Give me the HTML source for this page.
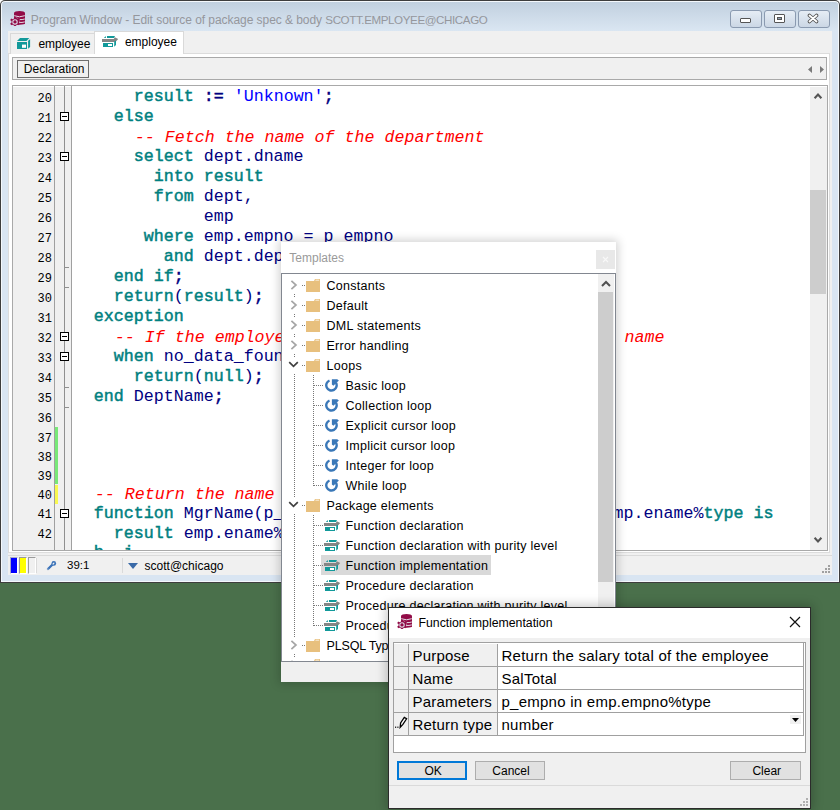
<!DOCTYPE html><html><head><meta charset="utf-8"><style>
*{margin:0;padding:0;box-sizing:border-box}
html,body{width:840px;height:810px;overflow:hidden;background:#4a704b;font-family:"Liberation Sans",sans-serif;position:relative}
.a{position:absolute}
.t{position:absolute;white-space:nowrap;line-height:1}
.code{position:absolute;font-family:"Liberation Mono",monospace;font-size:16.667px;white-space:pre;line-height:20px}
.k{color:#008080;font-weight:normal;-webkit-text-stroke:0.45px #008080}
.i{color:#000080}
.p{color:#000080;font-weight:normal;-webkit-text-stroke:0.45px #000080}
.s{color:#0000ff}
.c{color:#ff0000;font-style:italic;position:relative;left:1px;top:1px}
.ln{position:absolute;font-family:"Liberation Mono",monospace;font-size:12px;color:#000;text-align:right;width:40px;line-height:12px}
.tr{position:absolute;font-size:12.5px;letter-spacing:0.28px;color:#000;white-space:nowrap;line-height:1}
.gt{position:absolute;font-size:15px;letter-spacing:0.25px;color:#000;white-space:nowrap;line-height:1}
</style></head><body>
<div class="a" style="left:0px;top:0px;width:840px;height:8px;background:#fff"></div>
<div class="a" style="left:0px;top:0px;width:840px;height:583px;background:#3d3d3d;border-radius:5px 5px 0 0"></div>
<div class="a" style="left:1px;top:1px;width:838px;height:581px;background:#f4f8fc;border-radius:4px 4px 0 0"></div>
<div class="a" style="left:2px;top:2px;width:836px;height:579px;background:#d9e5f2;border-radius:3px 3px 0 0"></div>
<div class="a" style="left:2px;top:2px;width:836px;height:29px;background:linear-gradient(#c1d0df,#dae6f2);border-radius:3px 3px 0 0"></div>
<svg class="a" style="left:10px;top:10px" width="16" height="16" viewBox="0 0 16 16">
<g fill="#920c47"><ellipse cx="9.5" cy="3.1" rx="5.5" ry="2.2"/><rect x="4" y="3.1" width="11" height="10.6"/><ellipse cx="9.5" cy="13.6" rx="5.5" ry="1.1"/></g>
<path d="M4.2 5.7 Q9.5 7.9 14.8 5.7" stroke="#e4dce6" stroke-width="1" fill="none"/>
<path d="M9.6 9.6 Q12 9.8 14.8 9" stroke="#e4dce6" stroke-width="1" fill="none"/>
<path d="M9.2 12.4 Q12 12.7 14.8 11.9" stroke="#e4dce6" stroke-width="1" fill="none"/>
<circle cx="5" cy="11.9" r="4.5" fill="none" stroke="#d2dde9" stroke-width="0.6" opacity="0.6"/>
<rect x="4.1" y="6.9" width="1.8" height="10" fill="#920c47" transform="rotate(0 5 11.9)"/><rect x="4.1" y="6.9" width="1.8" height="10" fill="#920c47" transform="rotate(60 5 11.9)"/><rect x="4.1" y="6.9" width="1.8" height="10" fill="#920c47" transform="rotate(120 5 11.9)"/><circle cx="5" cy="11.9" r="3.5" fill="#920c47"/>
<circle cx="5" cy="11.9" r="2.2" fill="none" stroke="#dcdae6" stroke-width="1.1"/>
<circle cx="5" cy="11.9" r="1.1" fill="#920c47"/></svg>
<div class="t" style="left:30.7px;top:14.03px;font-size:12px;color:#95979d;letter-spacing:-0.055px">Program Window - Edit source of package spec &amp; body <span style="font-size:11.6px;letter-spacing:-0.4px">SCOTT.EMPLOYEE@CHICAGO</span></div>
<div class="a" style="left:730px;top:10px;width:32px;height:18px;border:1px solid #8a9ab0;border-radius:3px;background:linear-gradient(#e6edf5,#cbd7e5)"></div>
<div class="a" style="left:764px;top:10px;width:32px;height:18px;border:1px solid #8a9ab0;border-radius:3px;background:linear-gradient(#e6edf5,#cbd7e5)"></div>
<div class="a" style="left:798px;top:10px;width:32px;height:18px;border:1px solid #8a9ab0;border-radius:3px;background:linear-gradient(#e6edf5,#cbd7e5)"></div>
<div class="a" style="left:740px;top:18px;width:11px;height:5px;background:#fff;border:1px solid #555;border-radius:1px"></div>
<div class="a" style="left:774px;top:14px;width:11px;height:9px;background:#fff;border:1px solid #555;border-radius:1px"></div>
<div class="a" style="left:777px;top:17px;width:5px;height:3px;background:#8ea0b5;border:1px solid #555"></div>
<svg class="a" style="left:807px;top:13px" width="12" height="11" viewBox="0 0 12 11"><path d="M2.5 2.5 L9.5 8.5 M9.5 2.5 L2.5 8.5" stroke="#505050" stroke-width="3.6" stroke-linecap="round"/><path d="M2.5 2.5 L9.5 8.5 M9.5 2.5 L2.5 8.5" stroke="#fff" stroke-width="1.9" stroke-linecap="round"/></svg>
<div class="a" style="left:8px;top:31px;width:824px;height:544px;background:#f0f0f0"></div>
<div class="a" style="left:8px;top:53px;width:822px;height:500px;background:#fff;border:1px solid #dcdcdc"></div>
<div class="a" style="left:10px;top:33px;width:85px;height:21px;background:#f0f0f0;border:1px solid #d9d9d9;border-bottom:none"></div>
<div class="a" style="left:94px;top:31px;width:90px;height:23px;background:#fff;border:1px solid #d9d9d9;border-bottom:none"></div>
<svg class="a" style="left:17px;top:38px" width="14" height="12" viewBox="0 0 14 12">
<path d="M0 3 L3 0 L12.3 0 L9.5 3 Z" fill="#12999a"/><path d="M11.1 2.8 L13.1 1.2 L13.1 9 L11.1 10.8Z" fill="#12999a"/>
<rect x="0" y="4" width="10" height="7" fill="#12999a"/><rect x="5" y="6.6" width="4" height="3.2" fill="#fff"/></svg>
<div class="t" style="left:38.4px;top:37.83px;font-size:12px;color:#000">employee</div>
<svg class="a" style="left:102px;top:35px" width="17" height="13" viewBox="0 0 17 13">
<path d="M1.9 3 L3.9 0.9 L3.9 3Z" fill="#12999a"/><path d="M5 0.9 L13 0.9 L12 3 L5 3Z" fill="#12999a"/>
<path d="M0 4 L11.8 4 L12.8 2.2 L16.2 4 L13.5 7 L0 7Z" fill="#858585"/><path d="M12.2 6.8 L14 5.5 L14 10 L12.2 11.8Z" fill="#12999a"/>
<rect x="1" y="8" width="10" height="4" fill="#12999a"/><rect x="6" y="9" width="4" height="2" fill="#fff"/></svg>
<div class="t" style="left:124.9px;top:36.13px;font-size:12px;color:#000">employee</div>
<div class="a" style="left:12px;top:57px;width:815px;height:23px;background:#f0f0f0;border:1px solid #a9a9a9"></div>
<div class="a" style="left:17px;top:60px;width:72px;height:18px;background:#f0f0f0;border:1px solid #6d6d6d"></div>
<div class="t" style="left:23.8px;top:62.63px;font-size:12px;color:#000">Declaration</div>
<svg class="a" style="left:807px;top:66px" width="18" height="8" viewBox="0 0 18 8"><path d="M5 0 L1 3.5 L5 7Z M13 0 L17 3.5 L13 7Z" fill="#7a7a7a"/></svg>
<div class="a" style="left:12px;top:85px;width:816px;height:466px;background:#fff;border:1px solid #a9a9a9"></div>
<div class="a" style="left:13px;top:87px;width:41px;height:463px;background:#f0f0f0"></div>
<div class="a" style="left:54px;top:86px;width:1px;height:464px;background:#a0a0a0"></div>
<div class="a" style="left:55px;top:87px;width:16px;height:463px;background:#f0f0f0"></div>
<div class="a" style="left:64px;top:86px;width:1px;height:464px;background:#909090"></div>
<div class="a" style="left:71px;top:86px;width:1px;height:464px;background:#a0a0a0"></div>
<div class="a" style="left:55px;top:427.40000000000003px;width:3px;height:57.099999999999966px;background:#78e878"></div>
<div class="a" style="left:55px;top:484.5px;width:3px;height:19.700000000000045px;background:#f8f850"></div>
<div class="a" style="left:65px;top:267px;width:4px;height:1px;background:#909090"></div>
<div class="a" style="left:65px;top:287px;width:4px;height:1px;background:#909090"></div>
<div class="a" style="left:65px;top:387px;width:4px;height:1px;background:#909090"></div>
<div class="a" style="left:65px;top:407px;width:4px;height:1px;background:#909090"></div>
<div class="a" style="left:60px;top:112px;width:9px;height:9px;background:#fff;border:1px solid #000"></div>
<div class="a" style="left:62px;top:116px;width:5px;height:1px;background:#000"></div>
<div class="a" style="left:60px;top:152px;width:9px;height:9px;background:#fff;border:1px solid #000"></div>
<div class="a" style="left:62px;top:156px;width:5px;height:1px;background:#000"></div>
<div class="a" style="left:60px;top:332px;width:9px;height:9px;background:#fff;border:1px solid #000"></div>
<div class="a" style="left:62px;top:336px;width:5px;height:1px;background:#000"></div>
<div class="a" style="left:60px;top:352px;width:9px;height:9px;background:#fff;border:1px solid #000"></div>
<div class="a" style="left:62px;top:356px;width:5px;height:1px;background:#000"></div>
<div class="a" style="left:60px;top:509px;width:9px;height:9px;background:#fff;border:1px solid #000"></div>
<div class="a" style="left:62px;top:513px;width:5px;height:1px;background:#000"></div>
<div class="ln" style="left:12px;top:92.70px">20</div>
<div class="ln" style="left:12px;top:112.70px">21</div>
<div class="ln" style="left:12px;top:132.70px">22</div>
<div class="ln" style="left:12px;top:152.70px">23</div>
<div class="ln" style="left:12px;top:172.70px">24</div>
<div class="ln" style="left:12px;top:192.70px">25</div>
<div class="ln" style="left:12px;top:212.70px">26</div>
<div class="ln" style="left:12px;top:232.70px">27</div>
<div class="ln" style="left:12px;top:252.70px">28</div>
<div class="ln" style="left:12px;top:272.70px">29</div>
<div class="ln" style="left:12px;top:292.70px">30</div>
<div class="ln" style="left:12px;top:312.70px">31</div>
<div class="ln" style="left:12px;top:332.70px">32</div>
<div class="ln" style="left:12px;top:352.70px">33</div>
<div class="ln" style="left:12px;top:372.70px">34</div>
<div class="ln" style="left:12px;top:392.70px">35</div>
<div class="ln" style="left:12px;top:412.70px">36</div>
<div class="ln" style="left:12px;top:432.60px">37</div>
<div class="ln" style="left:12px;top:451.80px">38</div>
<div class="ln" style="left:12px;top:470.70px">39</div>
<div class="ln" style="left:12px;top:489.70px">40</div>
<div class="ln" style="left:12px;top:509.40px">41</div>
<div class="ln" style="left:12px;top:529.40px">42</div>
<div class="a" style="left:13px;top:550px;width:815px;height:1px;background:#a9a9a9"></div>
<div class="a" style="left:72px;top:87px;width:738px;height:463px;overflow:hidden"></div>
<div class="a" style="left:72px;top:87px;width:738px;height:463px;overflow:hidden">
<div class="code" style="left:21.70px;top:-0.20px">    <span class="k">result</span> <span class="p">:=</span> <span class="s">&#x27;Unknown&#x27;</span><span class="p">;</span></div>
<div class="code" style="left:21.70px;top:19.80px">  <span class="k">else</span></div>
<div class="code" style="left:21.70px;top:39.80px">    <span class="c">-- Fetch the name of the department</span></div>
<div class="code" style="left:21.70px;top:59.80px">    <span class="k">select</span> <span class="i">dept.dname</span></div>
<div class="code" style="left:21.70px;top:79.80px">      <span class="k">into</span> <span class="k">result</span></div>
<div class="code" style="left:21.70px;top:99.80px">      <span class="k">from</span> <span class="i">dept,</span></div>
<div class="code" style="left:21.70px;top:119.80px">           <span class="i">emp</span></div>
<div class="code" style="left:21.70px;top:139.80px">     <span class="k">where</span> <span class="i">emp.empno = p_empno</span></div>
<div class="code" style="left:21.70px;top:159.80px">       <span class="k">and</span> <span class="i">dept.deptno = emp.deptno</span><span class="p">;</span></div>
<div class="code" style="left:21.70px;top:179.80px">  <span class="k">end if</span><span class="p">;</span></div>
<div class="code" style="left:21.70px;top:199.80px">  <span class="k">return</span><span class="i">(</span><span class="k">result</span><span class="i">)</span><span class="p">;</span></div>
<div class="code" style="left:21.70px;top:219.80px"><span class="k">exception</span></div>
<div class="code" style="left:21.70px;top:239.80px">  <span class="c">-- If the employee has no department, return empty name</span></div>
<div class="code" style="left:21.70px;top:259.80px">  <span class="k">when</span> <span class="i">no_data_found</span> <span class="k">then</span></div>
<div class="code" style="left:21.70px;top:279.80px">    <span class="k">return</span><span class="i">(</span><span class="k">null</span><span class="i">)</span><span class="p">;</span></div>
<div class="code" style="left:21.70px;top:299.80px"><span class="k">end</span> <span class="i">DeptName</span><span class="p">;</span></div>
<div class="code" style="left:21.70px;top:396.80px"><span class="c">-- Return the name of the manager</span></div>
<div class="code" style="left:21.70px;top:416.50px"><span class="k">function</span> <span class="i">MgrName(p_empno in emp.empno%type) return emp.ename%</span><span class="k">type</span> <span class="k">is</span></div>
<div class="code" style="left:21.70px;top:436.50px">  <span class="k">result</span> <span class="i">emp.ename%</span><span class="k">type</span><span class="p">;</span></div>
<div class="code" style="left:21.70px;top:456.40px"><span class="k">b</span>  <span class="k">i</span></div>
</div>
<div class="a" style="left:810px;top:87px;width:17px;height:463px;background:#f0f0f0"></div>
<div class="a" style="left:810px;top:190px;width:16px;height:104px;background:#cdcdcd"></div>
<svg class="a" style="left:813px;top:92px" width="10" height="7" viewBox="0 0 10 7"><path d="M1.6 6.2 L5 2.6 L8.4 6.2" stroke="#555" stroke-width="2.1" fill="none"/></svg>
<svg class="a" style="left:813px;top:537px" width="10" height="7" viewBox="0 0 10 7"><path d="M1.6 0.8 L5 4.4 L8.4 0.8" stroke="#555" stroke-width="2.1" fill="none"/></svg>
<div class="a" style="left:8px;top:555px;width:824px;height:20px;background:#f0f0f0;border-top:1px solid #dadada"></div>
<div class="a" style="left:10px;top:557px;width:8px;height:17px;background:#0000ff;border-top:1px solid #a8a8c8;border-left:1px solid #a8a8c8;border-right:1px solid #fff;border-bottom:1px solid #fff"></div>
<div class="a" style="left:19px;top:557px;width:8px;height:17px;background:#ffff00;border-top:1px solid #9a9a9a;border-left:1px solid #9a9a9a;border-right:1px solid #fff;border-bottom:1px solid #fff"></div>
<div class="a" style="left:28px;top:557px;width:8px;height:17px;background:#f0f0f0;border-top:1px solid #9a9a9a;border-left:1px solid #9a9a9a;border-right:1px solid #fff;border-bottom:1px solid #fff"></div>
<div class="a" style="left:36px;top:558px;width:1px;height:15px;background:#dadada"></div>
<svg class="a" style="left:46px;top:561px" width="11" height="10" viewBox="0 0 11 10"><path d="M2 8 L7.3 2.8" stroke="#3a72b8" stroke-width="2.3" stroke-linecap="round"/><circle cx="7.8" cy="2.4" r="2.3" fill="#3a72b8"/><ellipse cx="7.5" cy="2.6" rx="1.2" ry="0.7" transform="rotate(-45 7.5 2.6)" fill="#f0f0f0"/><circle cx="1.9" cy="8.1" r="0.55" fill="#f0f0f0"/></svg>
<div class="t" style="left:67px;top:560.45px;font-size:11.5px;color:#000">39:1</div>
<div class="a" style="left:122px;top:558px;width:1px;height:15px;background:#dadada"></div>
<svg class="a" style="left:128px;top:563px" width="10" height="7" viewBox="0 0 10 7"><path d="M0 0 L10 0 L5 6Z" fill="#3a6aa8"/></svg>
<div class="t" style="left:144.6px;top:560.03px;font-size:12px;color:#000">scott@chicago</div>
<div class="a" style="left:828px;top:565px;width:2px;height:2px;background:#a0a0a0"></div>
<div class="a" style="left:825px;top:568px;width:2px;height:2px;background:#a0a0a0"></div>
<div class="a" style="left:828px;top:568px;width:2px;height:2px;background:#a0a0a0"></div>
<div class="a" style="left:822px;top:571px;width:2px;height:2px;background:#a0a0a0"></div>
<div class="a" style="left:825px;top:571px;width:2px;height:2px;background:#a0a0a0"></div>
<div class="a" style="left:828px;top:571px;width:2px;height:2px;background:#a0a0a0"></div>
<div class="a" style="left:281px;top:242px;width:335px;height:440px;background:#fff;box-shadow:0 0 9px 2px rgba(0,0,0,0.18)"></div>
<div class="t" style="left:289.3px;top:251.73px;font-size:12px;color:#9a9a9a">Templates</div>
<div class="a" style="left:596px;top:250px;width:19px;height:19px;background:#e8e8e8"></div>
<svg class="a" style="left:602px;top:256px" width="7" height="7" viewBox="0 0 7 7"><path d="M1 1L6 6M6 1L1 6" stroke="#f8f8f8" stroke-width="1.1"/></svg>
<div class="a" style="left:281px;top:273px;width:335px;height:389px;background:#fff;border:1px solid #828790"></div>
<div class="a" style="left:281px;top:662px;width:335px;height:20px;background:#f0f0f0"></div>
<div class="a" style="left:598px;top:274px;width:16px;height:387px;background:#f0f0f0"></div>
<div class="a" style="left:598px;top:292px;width:15px;height:290px;background:#cdcdcd"></div>
<svg class="a" style="left:601px;top:280px" width="10" height="7" viewBox="0 0 10 7"><path d="M1 6 L5 2 L9 6" stroke="#505050" stroke-width="2" fill="none"/></svg>
<div class="a" style="left:282px;top:274px;width:316px;height:387px;overflow:hidden">
<div class="a" style="left:12px;top:12px;width:1px;height:375px;background-image:linear-gradient(#777 50%,transparent 50%);background-size:1px 2px"></div>
<div class="a" style="left:31px;top:101px;width:1px;height:111px;background-image:linear-gradient(#777 50%,transparent 50%);background-size:1px 2px"></div>
<div class="a" style="left:31px;top:241px;width:1px;height:111px;background-image:linear-gradient(#777 50%,transparent 50%);background-size:1px 2px"></div>
<div class="a" style="left:20px;top:11px;width:4px;height:1px;background-image:linear-gradient(90deg,#777 50%,transparent 50%);background-size:2px 1px"></div>
<div class="a" style="left:7px;top:3px;width:10px;height:16px;background:#fff"></div>
<svg class="a" style="left:8px;top:6px" width="8" height="10" viewBox="0 0 8 10"><path d="M1.4 0.8 L6 5 L1.4 9.2" stroke="#a6a6a6" stroke-width="1.7" fill="none"/></svg>
<svg class="a" style="left:24px;top:5px" width="14" height="13" viewBox="0 0 14 13"><path d="M0 2 L8 2 L9 0 L14 0 L14 13 L0 13Z" fill="#e8c07e"/><path d="M9.6 0.8 L13.2 0.8 L13.2 1.6 L9.3 1.6Z" fill="#fff"/></svg>
<div class="tr" style="left:44.5px;top:5.90px">Constants</div>
<div class="a" style="left:20px;top:31px;width:4px;height:1px;background-image:linear-gradient(90deg,#777 50%,transparent 50%);background-size:2px 1px"></div>
<div class="a" style="left:7px;top:23px;width:10px;height:16px;background:#fff"></div>
<svg class="a" style="left:8px;top:26px" width="8" height="10" viewBox="0 0 8 10"><path d="M1.4 0.8 L6 5 L1.4 9.2" stroke="#a6a6a6" stroke-width="1.7" fill="none"/></svg>
<svg class="a" style="left:24px;top:25px" width="14" height="13" viewBox="0 0 14 13"><path d="M0 2 L8 2 L9 0 L14 0 L14 13 L0 13Z" fill="#e8c07e"/><path d="M9.6 0.8 L13.2 0.8 L13.2 1.6 L9.3 1.6Z" fill="#fff"/></svg>
<div class="tr" style="left:44.5px;top:25.90px">Default</div>
<div class="a" style="left:20px;top:51px;width:4px;height:1px;background-image:linear-gradient(90deg,#777 50%,transparent 50%);background-size:2px 1px"></div>
<div class="a" style="left:7px;top:43px;width:10px;height:16px;background:#fff"></div>
<svg class="a" style="left:8px;top:46px" width="8" height="10" viewBox="0 0 8 10"><path d="M1.4 0.8 L6 5 L1.4 9.2" stroke="#a6a6a6" stroke-width="1.7" fill="none"/></svg>
<svg class="a" style="left:24px;top:45px" width="14" height="13" viewBox="0 0 14 13"><path d="M0 2 L8 2 L9 0 L14 0 L14 13 L0 13Z" fill="#e8c07e"/><path d="M9.6 0.8 L13.2 0.8 L13.2 1.6 L9.3 1.6Z" fill="#fff"/></svg>
<div class="tr" style="left:44.5px;top:45.90px">DML statements</div>
<div class="a" style="left:20px;top:71px;width:4px;height:1px;background-image:linear-gradient(90deg,#777 50%,transparent 50%);background-size:2px 1px"></div>
<div class="a" style="left:7px;top:63px;width:10px;height:16px;background:#fff"></div>
<svg class="a" style="left:8px;top:66px" width="8" height="10" viewBox="0 0 8 10"><path d="M1.4 0.8 L6 5 L1.4 9.2" stroke="#a6a6a6" stroke-width="1.7" fill="none"/></svg>
<svg class="a" style="left:24px;top:65px" width="14" height="13" viewBox="0 0 14 13"><path d="M0 2 L8 2 L9 0 L14 0 L14 13 L0 13Z" fill="#e8c07e"/><path d="M9.6 0.8 L13.2 0.8 L13.2 1.6 L9.3 1.6Z" fill="#fff"/></svg>
<div class="tr" style="left:44.5px;top:65.90px">Error handling</div>
<div class="a" style="left:20px;top:91px;width:4px;height:1px;background-image:linear-gradient(90deg,#777 50%,transparent 50%);background-size:2px 1px"></div>
<div class="a" style="left:7px;top:83px;width:10px;height:16px;background:#fff"></div>
<svg class="a" style="left:6px;top:87px" width="11" height="7" viewBox="0 0 11 7"><path d="M1.2 1.2 L5.5 5.3 L9.8 1.2" stroke="#404040" stroke-width="1.7" fill="none"/></svg>
<svg class="a" style="left:24px;top:85px" width="14" height="13" viewBox="0 0 14 13"><path d="M0 2 L8 2 L9 0 L14 0 L14 13 L0 13Z" fill="#e8c07e"/><path d="M9.6 0.8 L13.2 0.8 L13.2 1.6 L9.3 1.6Z" fill="#fff"/></svg>
<div class="tr" style="left:44.5px;top:85.90px">Loops</div>
<div class="a" style="left:32px;top:111px;width:10px;height:1px;background-image:linear-gradient(90deg,#777 50%,transparent 50%);background-size:2px 1px"></div>
<svg class="a" style="left:43px;top:105px" width="14" height="13" viewBox="0 0 14 13"><path d="M4.5 1.5 A5.2 5.2 0 1 0 10.9 3.6" stroke="#3a78b8" stroke-width="2.4" fill="none"/><path d="M6.9 0.2 L12.2 0.2 L13.9 1.6 L8.4 6.8 L6.9 5.6 Z" fill="#3a78b8"/></svg>
<div class="tr" style="left:63.5px;top:105.90px">Basic loop</div>
<div class="a" style="left:32px;top:131px;width:10px;height:1px;background-image:linear-gradient(90deg,#777 50%,transparent 50%);background-size:2px 1px"></div>
<svg class="a" style="left:43px;top:125px" width="14" height="13" viewBox="0 0 14 13"><path d="M4.5 1.5 A5.2 5.2 0 1 0 10.9 3.6" stroke="#3a78b8" stroke-width="2.4" fill="none"/><path d="M6.9 0.2 L12.2 0.2 L13.9 1.6 L8.4 6.8 L6.9 5.6 Z" fill="#3a78b8"/></svg>
<div class="tr" style="left:63.5px;top:125.90px">Collection loop</div>
<div class="a" style="left:32px;top:151px;width:10px;height:1px;background-image:linear-gradient(90deg,#777 50%,transparent 50%);background-size:2px 1px"></div>
<svg class="a" style="left:43px;top:145px" width="14" height="13" viewBox="0 0 14 13"><path d="M4.5 1.5 A5.2 5.2 0 1 0 10.9 3.6" stroke="#3a78b8" stroke-width="2.4" fill="none"/><path d="M6.9 0.2 L12.2 0.2 L13.9 1.6 L8.4 6.8 L6.9 5.6 Z" fill="#3a78b8"/></svg>
<div class="tr" style="left:63.5px;top:145.90px">Explicit cursor loop</div>
<div class="a" style="left:32px;top:171px;width:10px;height:1px;background-image:linear-gradient(90deg,#777 50%,transparent 50%);background-size:2px 1px"></div>
<svg class="a" style="left:43px;top:165px" width="14" height="13" viewBox="0 0 14 13"><path d="M4.5 1.5 A5.2 5.2 0 1 0 10.9 3.6" stroke="#3a78b8" stroke-width="2.4" fill="none"/><path d="M6.9 0.2 L12.2 0.2 L13.9 1.6 L8.4 6.8 L6.9 5.6 Z" fill="#3a78b8"/></svg>
<div class="tr" style="left:63.5px;top:165.90px">Implicit cursor loop</div>
<div class="a" style="left:32px;top:191px;width:10px;height:1px;background-image:linear-gradient(90deg,#777 50%,transparent 50%);background-size:2px 1px"></div>
<svg class="a" style="left:43px;top:185px" width="14" height="13" viewBox="0 0 14 13"><path d="M4.5 1.5 A5.2 5.2 0 1 0 10.9 3.6" stroke="#3a78b8" stroke-width="2.4" fill="none"/><path d="M6.9 0.2 L12.2 0.2 L13.9 1.6 L8.4 6.8 L6.9 5.6 Z" fill="#3a78b8"/></svg>
<div class="tr" style="left:63.5px;top:185.90px">Integer for loop</div>
<div class="a" style="left:32px;top:211px;width:10px;height:1px;background-image:linear-gradient(90deg,#777 50%,transparent 50%);background-size:2px 1px"></div>
<svg class="a" style="left:43px;top:205px" width="14" height="13" viewBox="0 0 14 13"><path d="M4.5 1.5 A5.2 5.2 0 1 0 10.9 3.6" stroke="#3a78b8" stroke-width="2.4" fill="none"/><path d="M6.9 0.2 L12.2 0.2 L13.9 1.6 L8.4 6.8 L6.9 5.6 Z" fill="#3a78b8"/></svg>
<div class="tr" style="left:63.5px;top:205.90px">While loop</div>
<div class="a" style="left:20px;top:231px;width:4px;height:1px;background-image:linear-gradient(90deg,#777 50%,transparent 50%);background-size:2px 1px"></div>
<div class="a" style="left:7px;top:223px;width:10px;height:16px;background:#fff"></div>
<svg class="a" style="left:6px;top:227px" width="11" height="7" viewBox="0 0 11 7"><path d="M1.2 1.2 L5.5 5.3 L9.8 1.2" stroke="#404040" stroke-width="1.7" fill="none"/></svg>
<svg class="a" style="left:24px;top:225px" width="14" height="13" viewBox="0 0 14 13"><path d="M0 2 L8 2 L9 0 L14 0 L14 13 L0 13Z" fill="#e8c07e"/><path d="M9.6 0.8 L13.2 0.8 L13.2 1.6 L9.3 1.6Z" fill="#fff"/></svg>
<div class="tr" style="left:44.5px;top:225.90px">Package elements</div>
<div class="a" style="left:32px;top:251px;width:10px;height:1px;background-image:linear-gradient(90deg,#777 50%,transparent 50%);background-size:2px 1px"></div>
<svg class="a" style="left:42px;top:245px" width="17" height="13" viewBox="0 0 17 13">
<path d="M1.9 3 L3.9 0.9 L3.9 3Z" fill="#12999a"/><path d="M5 0.9 L13 0.9 L12 3 L5 3Z" fill="#12999a"/>
<path d="M0 4 L11.8 4 L12.8 2.2 L16.2 4 L13.5 7 L0 7Z" fill="#858585"/><path d="M12.2 6.8 L14 5.5 L14 10 L12.2 11.8Z" fill="#12999a"/>
<rect x="1" y="8" width="10" height="4" fill="#12999a"/><rect x="6" y="9" width="4" height="2" fill="#fff"/></svg>
<div class="tr" style="left:63.5px;top:245.90px">Function declaration</div>
<div class="a" style="left:32px;top:271px;width:10px;height:1px;background-image:linear-gradient(90deg,#777 50%,transparent 50%);background-size:2px 1px"></div>
<svg class="a" style="left:42px;top:265px" width="17" height="13" viewBox="0 0 17 13">
<path d="M1.9 3 L3.9 0.9 L3.9 3Z" fill="#12999a"/><path d="M5 0.9 L13 0.9 L12 3 L5 3Z" fill="#12999a"/>
<path d="M0 4 L11.8 4 L12.8 2.2 L16.2 4 L13.5 7 L0 7Z" fill="#858585"/><path d="M12.2 6.8 L14 5.5 L14 10 L12.2 11.8Z" fill="#12999a"/>
<rect x="1" y="8" width="10" height="4" fill="#12999a"/><rect x="6" y="9" width="4" height="2" fill="#fff"/></svg>
<div class="tr" style="left:63.5px;top:265.90px">Function declaration with purity level</div>
<div class="a" style="left:39px;top:281px;width:170px;height:20px;background:#d9d9d9"></div>
<div class="a" style="left:32px;top:291px;width:10px;height:1px;background-image:linear-gradient(90deg,#777 50%,transparent 50%);background-size:2px 1px"></div>
<svg class="a" style="left:42px;top:285px" width="17" height="13" viewBox="0 0 17 13">
<path d="M1.9 3 L3.9 0.9 L3.9 3Z" fill="#12999a"/><path d="M5 0.9 L13 0.9 L12 3 L5 3Z" fill="#12999a"/>
<path d="M0 4 L11.8 4 L12.8 2.2 L16.2 4 L13.5 7 L0 7Z" fill="#858585"/><path d="M12.2 6.8 L14 5.5 L14 10 L12.2 11.8Z" fill="#12999a"/>
<rect x="1" y="8" width="10" height="4" fill="#12999a"/><rect x="6" y="9" width="4" height="2" fill="#fff"/></svg>
<div class="tr" style="left:63.5px;top:285.90px">Function implementation</div>
<div class="a" style="left:32px;top:311px;width:10px;height:1px;background-image:linear-gradient(90deg,#777 50%,transparent 50%);background-size:2px 1px"></div>
<svg class="a" style="left:42px;top:305px" width="17" height="13" viewBox="0 0 17 13">
<path d="M1.9 3 L3.9 0.9 L3.9 3Z" fill="#12999a"/><path d="M5 0.9 L13 0.9 L12 3 L5 3Z" fill="#12999a"/>
<path d="M0 4 L11.8 4 L12.8 2.2 L16.2 4 L13.5 7 L0 7Z" fill="#858585"/><path d="M12.2 6.8 L14 5.5 L14 10 L12.2 11.8Z" fill="#12999a"/>
<rect x="1" y="8" width="10" height="4" fill="#12999a"/><rect x="6" y="9" width="4" height="2" fill="#fff"/></svg>
<div class="tr" style="left:63.5px;top:305.90px">Procedure declaration</div>
<div class="a" style="left:32px;top:331px;width:10px;height:1px;background-image:linear-gradient(90deg,#777 50%,transparent 50%);background-size:2px 1px"></div>
<svg class="a" style="left:42px;top:325px" width="17" height="13" viewBox="0 0 17 13">
<path d="M1.9 3 L3.9 0.9 L3.9 3Z" fill="#12999a"/><path d="M5 0.9 L13 0.9 L12 3 L5 3Z" fill="#12999a"/>
<path d="M0 4 L11.8 4 L12.8 2.2 L16.2 4 L13.5 7 L0 7Z" fill="#858585"/><path d="M12.2 6.8 L14 5.5 L14 10 L12.2 11.8Z" fill="#12999a"/>
<rect x="1" y="8" width="10" height="4" fill="#12999a"/><rect x="6" y="9" width="4" height="2" fill="#fff"/></svg>
<div class="tr" style="left:63.5px;top:325.90px">Procedure declaration with purity level</div>
<div class="a" style="left:32px;top:351px;width:10px;height:1px;background-image:linear-gradient(90deg,#777 50%,transparent 50%);background-size:2px 1px"></div>
<svg class="a" style="left:42px;top:345px" width="17" height="13" viewBox="0 0 17 13">
<path d="M1.9 3 L3.9 0.9 L3.9 3Z" fill="#12999a"/><path d="M5 0.9 L13 0.9 L12 3 L5 3Z" fill="#12999a"/>
<path d="M0 4 L11.8 4 L12.8 2.2 L16.2 4 L13.5 7 L0 7Z" fill="#858585"/><path d="M12.2 6.8 L14 5.5 L14 10 L12.2 11.8Z" fill="#12999a"/>
<rect x="1" y="8" width="10" height="4" fill="#12999a"/><rect x="6" y="9" width="4" height="2" fill="#fff"/></svg>
<div class="tr" style="left:63.5px;top:345.90px">Procedure implementation</div>
<div class="a" style="left:20px;top:371px;width:4px;height:1px;background-image:linear-gradient(90deg,#777 50%,transparent 50%);background-size:2px 1px"></div>
<div class="a" style="left:7px;top:363px;width:10px;height:16px;background:#fff"></div>
<svg class="a" style="left:8px;top:366px" width="8" height="10" viewBox="0 0 8 10"><path d="M1.4 0.8 L6 5 L1.4 9.2" stroke="#a6a6a6" stroke-width="1.7" fill="none"/></svg>
<svg class="a" style="left:24px;top:365px" width="14" height="13" viewBox="0 0 14 13"><path d="M0 2 L8 2 L9 0 L14 0 L14 13 L0 13Z" fill="#e8c07e"/><path d="M9.6 0.8 L13.2 0.8 L13.2 1.6 L9.3 1.6Z" fill="#fff"/></svg>
<div class="tr" style="left:44.5px;top:365.90px;letter-spacing:-0.15px">PLSQL Types</div>
<div class="a" style="left:20px;top:391px;width:4px;height:1px;background-image:linear-gradient(90deg,#777 50%,transparent 50%);background-size:2px 1px"></div>
<div class="a" style="left:7px;top:383px;width:10px;height:16px;background:#fff"></div>
<svg class="a" style="left:8px;top:386px" width="8" height="10" viewBox="0 0 8 10"><path d="M1.4 0.8 L6 5 L1.4 9.2" stroke="#a6a6a6" stroke-width="1.7" fill="none"/></svg>
<svg class="a" style="left:24px;top:385px" width="14" height="13" viewBox="0 0 14 13"><path d="M0 2 L8 2 L9 0 L14 0 L14 13 L0 13Z" fill="#e8c07e"/><path d="M9.6 0.8 L13.2 0.8 L13.2 1.6 L9.3 1.6Z" fill="#fff"/></svg>
<div class="tr" style="left:44.5px;top:385.90px">SQL</div>
</div>
<div class="a" style="left:388px;top:607px;width:423px;height:202px;background:#f0f0f0;border:1px solid #2b2b2b;box-shadow:0 0 10px 2px rgba(0,0,0,0.22)"></div>
<div class="a" style="left:389px;top:608px;width:421px;height:30px;background:#fff"></div>
<svg class="a" style="left:397px;top:613px" width="16" height="16" viewBox="0 0 16 16">
<g fill="#920c47"><ellipse cx="9.5" cy="3.1" rx="5.5" ry="2.2"/><rect x="4" y="3.1" width="11" height="10.6"/><ellipse cx="9.5" cy="13.6" rx="5.5" ry="1.1"/></g>
<path d="M4.2 5.7 Q9.5 7.9 14.8 5.7" stroke="#e4dce6" stroke-width="1" fill="none"/>
<path d="M9.6 9.6 Q12 9.8 14.8 9" stroke="#e4dce6" stroke-width="1" fill="none"/>
<path d="M9.2 12.4 Q12 12.7 14.8 11.9" stroke="#e4dce6" stroke-width="1" fill="none"/>
<circle cx="5" cy="11.9" r="4.5" fill="none" stroke="#ffffff" stroke-width="0.6" opacity="0.6"/>
<rect x="4.1" y="6.9" width="1.8" height="10" fill="#920c47" transform="rotate(0 5 11.9)"/><rect x="4.1" y="6.9" width="1.8" height="10" fill="#920c47" transform="rotate(60 5 11.9)"/><rect x="4.1" y="6.9" width="1.8" height="10" fill="#920c47" transform="rotate(120 5 11.9)"/><circle cx="5" cy="11.9" r="3.5" fill="#920c47"/>
<circle cx="5" cy="11.9" r="2.2" fill="none" stroke="#dcdae6" stroke-width="1.1"/>
<circle cx="5" cy="11.9" r="1.1" fill="#920c47"/></svg>
<div class="t" style="left:418.5px;top:616.98px;font-size:12.3px;color:#000">Function implementation</div>
<svg class="a" style="left:789px;top:616px" width="12" height="12" viewBox="0 0 12 12"><path d="M1 1L11 11M11 1L1 11" stroke="#111" stroke-width="1.2"/></svg>
<div class="a" style="left:393px;top:642px;width:413px;height:111px;background:#fff;border:1px solid #a0a0a0"></div>
<div class="a" style="left:394px;top:644px;width:14px;height:23px;background:#f0f0f0;border-bottom:1px solid #a0a0a0"></div>
<div class="a" style="left:408px;top:644px;width:1px;height:23px;background:#a0a0a0"></div>
<div class="a" style="left:409px;top:644px;width:88px;height:23px;background:#f0f0f0;border-bottom:1px solid #a0a0a0"></div>
<div class="a" style="left:497px;top:644px;width:1px;height:23px;background:#a0a0a0"></div>
<div class="a" style="left:498px;top:644px;width:306px;height:23px;background:#fff;border-bottom:1px solid #a0a0a0"></div>
<div class="t" style="left:412.5px;top:648.04px;font-size:15px;color:#000;letter-spacing:0.2px">Purpose</div>
<div class="t" style="left:501.5px;top:648.04px;font-size:15px;color:#000;letter-spacing:0.25px">Return the salary total of the employee</div>
<div class="a" style="left:394px;top:667px;width:14px;height:23px;background:#f0f0f0;border-bottom:1px solid #a0a0a0"></div>
<div class="a" style="left:408px;top:667px;width:1px;height:23px;background:#a0a0a0"></div>
<div class="a" style="left:409px;top:667px;width:88px;height:23px;background:#f0f0f0;border-bottom:1px solid #a0a0a0"></div>
<div class="a" style="left:497px;top:667px;width:1px;height:23px;background:#a0a0a0"></div>
<div class="a" style="left:498px;top:667px;width:306px;height:23px;background:#fff;border-bottom:1px solid #a0a0a0"></div>
<div class="t" style="left:412.5px;top:671.04px;font-size:15px;color:#000;letter-spacing:0.2px">Name</div>
<div class="t" style="left:501.5px;top:671.04px;font-size:15px;color:#000;letter-spacing:0.25px">SalTotal</div>
<div class="a" style="left:394px;top:690px;width:14px;height:23px;background:#f0f0f0;border-bottom:1px solid #a0a0a0"></div>
<div class="a" style="left:408px;top:690px;width:1px;height:23px;background:#a0a0a0"></div>
<div class="a" style="left:409px;top:690px;width:88px;height:23px;background:#f0f0f0;border-bottom:1px solid #a0a0a0"></div>
<div class="a" style="left:497px;top:690px;width:1px;height:23px;background:#a0a0a0"></div>
<div class="a" style="left:498px;top:690px;width:306px;height:23px;background:#fff;border-bottom:1px solid #a0a0a0"></div>
<div class="t" style="left:412.5px;top:694.04px;font-size:15px;color:#000;letter-spacing:0.2px">Parameters</div>
<div class="t" style="left:501.5px;top:694.04px;font-size:15px;color:#000;letter-spacing:0.25px">p_empno in emp.empno%type</div>
<div class="a" style="left:394px;top:713px;width:14px;height:23px;background:#f0f0f0;border-bottom:1px solid #a0a0a0"></div>
<div class="a" style="left:408px;top:713px;width:1px;height:23px;background:#a0a0a0"></div>
<div class="a" style="left:409px;top:713px;width:88px;height:23px;background:#f0f0f0;border-bottom:1px solid #a0a0a0"></div>
<div class="a" style="left:497px;top:713px;width:1px;height:23px;background:#a0a0a0"></div>
<div class="a" style="left:498px;top:713px;width:306px;height:23px;background:#fff;border-bottom:1px solid #a0a0a0"></div>
<div class="t" style="left:412.5px;top:717.04px;font-size:15px;color:#000;letter-spacing:0.2px">Return type</div>
<div class="t" style="left:501.5px;top:717.04px;font-size:15px;color:#000;letter-spacing:0.25px">number</div>
<div class="a" style="left:803px;top:643px;width:1px;height:93px;background:#a0a0a0"></div>
<svg class="a" style="left:394px;top:716px" width="14" height="13" viewBox="0 0 14 13"><path d="M6.2 11.3 L6.6 7 L10.3 1.4 L12.6 2.8 L8.9 8.4 Z" fill="#fff" stroke="#000" stroke-width="1.3"/><rect x="1" y="10.6" width="1.2" height="1.2" fill="#000"/><rect x="3.3" y="10.6" width="1.2" height="1.2" fill="#000"/></svg>
<div class="a" style="left:790px;top:715px;width:11px;height:9px;background:#f0f0f0"></div>
<svg class="a" style="left:792px;top:718px" width="7" height="4" viewBox="0 0 7 4"><path d="M0 0 L7 0 L3.5 4Z" fill="#000"/></svg>
<div class="a" style="left:397px;top:761px;width:70px;height:19px;background:#e1e1e1;border:2px solid #0078d7"></div>
<div class="t" style="left:424.5px;top:764.83px;font-size:12px;color:#000">OK</div>
<div class="a" style="left:475px;top:761px;width:70px;height:19px;background:#e1e1e1;border:1px solid #adadad"></div>
<div class="t" style="left:492.3px;top:764.83px;font-size:12px;color:#000">Cancel</div>
<div class="a" style="left:730px;top:761px;width:71px;height:19px;background:#e1e1e1;border:1px solid #adadad"></div>
<div class="t" style="left:752.4px;top:764.83px;font-size:12px;color:#000">Clear</div>
<div class="a" style="left:389px;top:785px;width:421px;height:1px;background:#dadada"></div>
<div class="a" style="left:806px;top:798px;width:2px;height:2px;background:#b0b0b0"></div>
<div class="a" style="left:803px;top:801px;width:2px;height:2px;background:#b0b0b0"></div>
<div class="a" style="left:806px;top:801px;width:2px;height:2px;background:#b0b0b0"></div>
<div class="a" style="left:800px;top:804px;width:2px;height:2px;background:#b0b0b0"></div>
<div class="a" style="left:803px;top:804px;width:2px;height:2px;background:#b0b0b0"></div>
<div class="a" style="left:806px;top:804px;width:2px;height:2px;background:#b0b0b0"></div>
</body></html>
